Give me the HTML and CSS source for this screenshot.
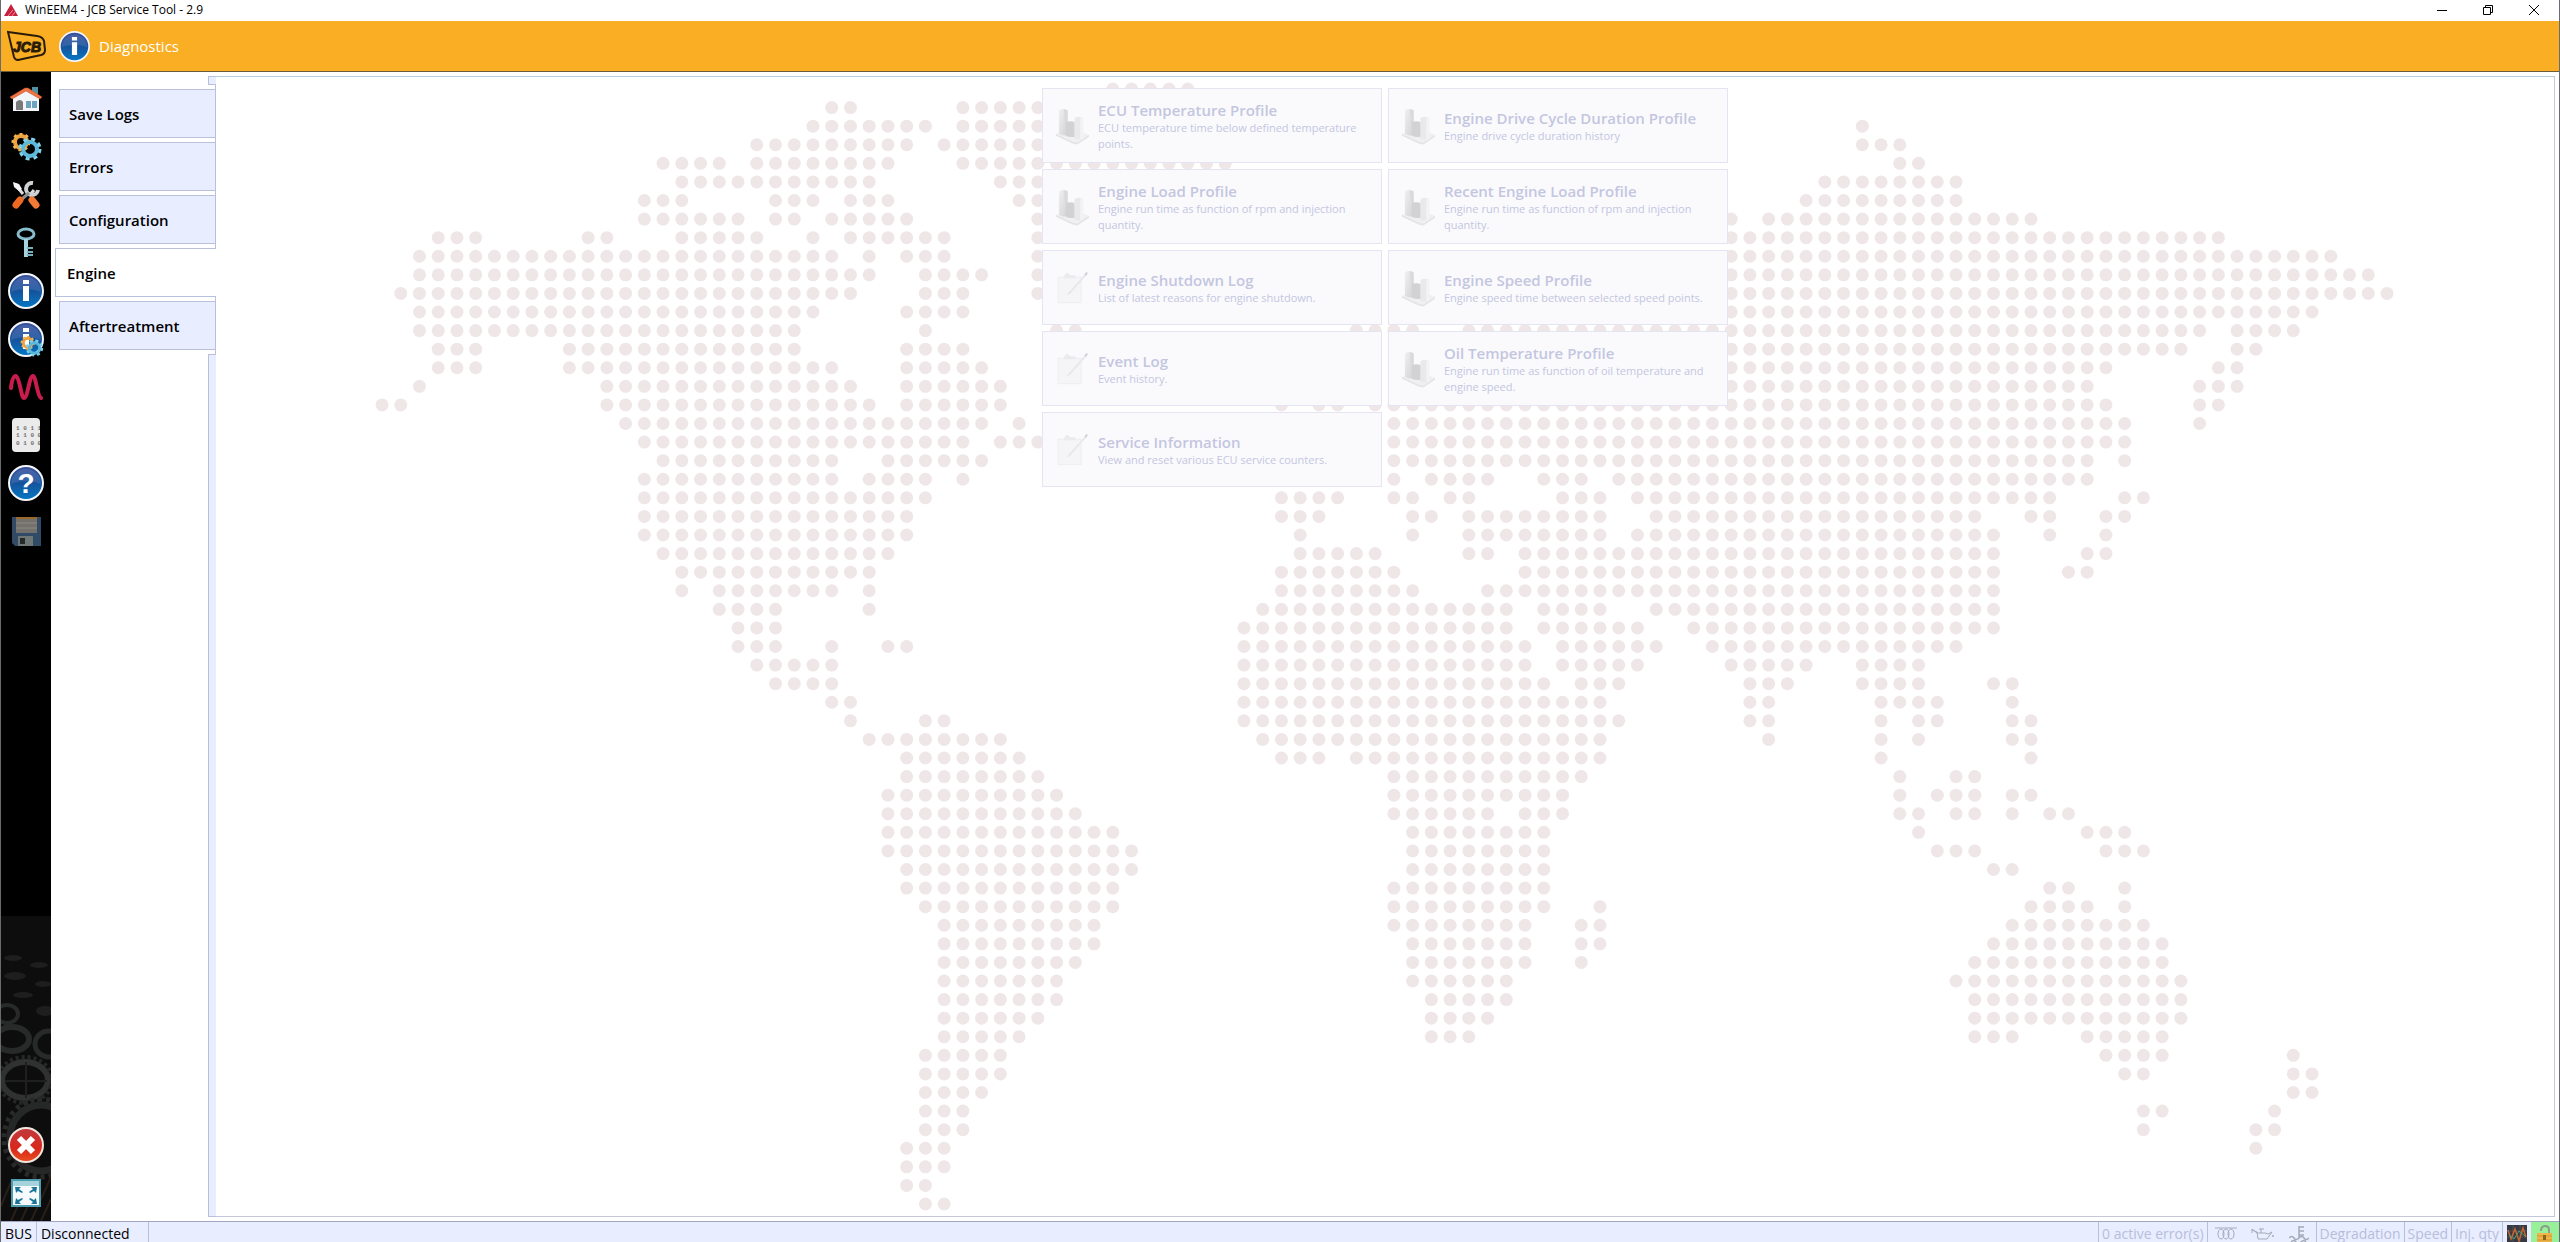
FILE: index.html
```html
<!DOCTYPE html>
<html lang="en">
<head>
    <meta charset="UTF-8">
    <title>WinEEM4 - JCB Service Tool - 2.9</title>
    <link rel="stylesheet" href="styles.css">
</head>
<body>

    <!-- Shared icons -->
    <svg class="sprite" aria-hidden="true">
        <defs>
            <linearGradient id="blue" x1="0" y1="0" x2="0" y2="1">
                <stop offset="0" stop-color="#3d4f9e"/>
                <stop offset="0.5" stop-color="#15539c"/>
                <stop offset="1" stop-color="#0478c4"/>
            </linearGradient>
            <linearGradient id="red" x1="0" y1="0" x2="0" y2="1">
                <stop offset="0" stop-color="#c03a3e"/>
                <stop offset="0.6" stop-color="#d8281c"/>
                <stop offset="1" stop-color="#e8501e"/>
            </linearGradient>
            <linearGradient id="bar" x1="0" y1="0" x2="1" y2="1">
                <stop offset="0" stop-color="#f0f0f0"/>
                <stop offset="1" stop-color="#d2d2d4"/>
            </linearGradient>
        </defs>
        <symbol id="icon-info" viewBox="0 0 36 36">
            <circle cx="18" cy="18" r="17" fill="url(#blue)" stroke="#f4f6fa" stroke-width="2"/>
            <path d="M3 19a15 15 0 0 1 30 0q-15-6-30 0z" fill="#ffffff" opacity="0.1"/>
            <path d="M15 7h6v4h-6zM15 13h6v15h-6z" fill="#ffffff"/>
        </symbol>
        <symbol id="icon-gears" viewBox="0 0 32 28">
            <circle cx="11" cy="9" r="6" fill="none" stroke="#eda13c" stroke-width="4"/>
            <circle cx="11" cy="9" r="8" fill="none" stroke="#f2b04e" stroke-width="3" stroke-dasharray="3 3"/>
            <circle cx="20" cy="16" r="7" fill="none" stroke="#5cb9dc" stroke-width="4"/>
            <circle cx="20" cy="16" r="10" fill="none" stroke="#7fd0ea" stroke-width="3" stroke-dasharray="4 4"/>
        </symbol>
        <symbol id="icon-chart" viewBox="0 0 36 38">
            <path d="M1 27l18-5 16 6-12 8-5-1z" fill="#f0f0f2"/>
            <path d="M1 27l17 8 5 1 12-8v2l-12 8-5-1-17-8z" fill="#e4e4e6"/>
            <path d="M4 3q5-3 9 0v25q-5 2-9-1z" fill="url(#bar)"/>
            <path d="M9 2q3 0 4 1v12l-3-1z" fill="#dadadc"/>
            <path d="M20 11q5-3 9 0v21q-5 2-9 0z" fill="#e9e9eb"/>
            <path d="M26 10l3 1v21l-3 1z" fill="#f3f3f5"/>
            <path d="M11 15q5-2 9 0v15q-5 1-9-1z" fill="#d2d2d4"/>
        </symbol>
        <symbol id="icon-log" viewBox="0 0 36 38">
            <path d="M3 8h24v26H3z" fill="#f5f5f7" stroke="#eeeef1"/>
            <path d="M9 7l3-4 4 3h5v3H9z" fill="#ebebee"/>
            <path d="M15 24L31 6" stroke="#e8e8ec" stroke-width="2"/>
            <path d="M31 6l2-3" stroke="#cfcfd4" stroke-width="2"/>
            <path d="M13 26l3-3" stroke="#dadade"/>
        </symbol>
    </svg>

    <div class="window">

        <!-- Title Bar -->
        <div class="titlebar">
            <svg class="app-icon" viewBox="0 0 14 12" aria-hidden="true">
                <path d="M7 0l7 12H0z" fill="#c8203c"/>
                <path d="M4 12l5-6M8 12l3-4" stroke="#e890a0"/>
            </svg>
            <span class="window-title">WinEEM4 - JCB Service Tool - 2.9</span>
            <div class="window-controls">
                <button type="button" aria-label="Minimize">
                    <svg viewBox="0 0 10 10"><path d="M0 5.5h10" stroke="#000"/></svg>
                </button>
                <button type="button" aria-label="Restore">
                    <svg viewBox="0 0 10 10"><path d="M.5 2.5h7v7h-7zM2.5 2.5v-2h7v7h-2" fill="none" stroke="#000"/></svg>
                </button>
                <button type="button" aria-label="Close">
                    <svg viewBox="0 0 10 10"><path d="M0 0l10 10M10 0L0 10" stroke="#000"/></svg>
                </button>
            </div>
        </div>

        <!-- Header -->
        <header class="header">
            <svg class="logo" viewBox="0 0 40 32" role="img" aria-label="JCB">
                <path d="M1 2l29 4q6 1 7 5l1 9q0 4-4 5L11 30q-3 0-4-3z" fill="none" stroke="#2a1c08" stroke-width="2"/>
                <text x="6" y="22" class="logo-text">JCB</text>
            </svg>
            <svg class="header-icon" aria-hidden="true"><use href="#icon-info"/></svg>
            <h1>Diagnostics</h1>
        </header>

        <div class="body">

            <!-- Tool Bar -->
            <nav class="toolbar" aria-label="Tools">
                <svg class="toolbar-art" viewBox="0 0 50 305" preserveAspectRatio="none" aria-hidden="true">
                    <path d="M0 0h50v305H0z" fill="#0d0d0d"/>
                    <g fill="#1e1e1e">
                        <ellipse cx="12" cy="42" rx="9" ry="3"/>
                        <ellipse cx="38" cy="49" rx="9" ry="3"/>
                        <ellipse cx="14" cy="60" rx="11" ry="4"/>
                        <ellipse cx="42" cy="68" rx="8" ry="3"/>
                        <ellipse cx="22" cy="79" rx="10" ry="3"/>
                        <ellipse cx="44" cy="95" rx="9" ry="5"/>
                    </g>
                    <g fill="none" stroke="#282929">
                        <ellipse cx="6" cy="98" rx="11" ry="9" stroke-width="4"/>
                        <ellipse cx="11" cy="123" rx="17" ry="12" stroke-width="6"/>
                        <ellipse cx="48" cy="128" rx="14" ry="13" stroke-width="5"/>
                        <ellipse cx="24" cy="164" rx="23" ry="18" stroke="#303232" stroke-width="6"/>
                        <ellipse cx="24" cy="164" rx="27" ry="23" stroke="#262828" stroke-width="4" stroke-dasharray="3 3"/>
                        <path d="M25 146v36M4 165h42" stroke="#1e1f1f" stroke-width="2"/>
                        <ellipse cx="40" cy="222" rx="31" ry="33" stroke="#262828" stroke-width="7"/>
                        <ellipse cx="40" cy="222" rx="37" ry="39" stroke="#282a2a" stroke-width="5" stroke-dasharray="4 4"/>
                        <path d="M10 305l18-40M20 305l20-44M30 305l20-44M40 305l10-22M0 290l10-24" stroke="#2a1f18" stroke-width="2"/>
                    </g>
                </svg>
                <button type="button" aria-label="Home">
                    <svg width="34" height="26" viewBox="0 0 34 26">
                        <path d="M23 1h6v10h-6z" fill="#4d93a6"/>
                        <path d="M4 12L17 4l13 8v13H4z" fill="#f2f6fa"/>
                        <path d="M1 11L16 2l3 0 14 9-2 2L17 5 3 13z" fill="#ee7444" stroke="#c84e24" stroke-width="0.5"/>
                        <path d="M7 24v-8q4-4 7 0v8z" fill="#77797c"/>
                        <path d="M17 15h5v7h-5zM23 15h5v7h-5z" fill="#6ea4c0"/>
                    </svg>
                </button>
                <button type="button" aria-label="Settings">
                    <svg width="32" height="28"><use href="#icon-gears"/></svg>
                </button>
                <button type="button" aria-label="Service">
                    <svg width="30" height="28" viewBox="0 0 30 28">
                        <path d="M12 13L4 3M18 15l5-6" stroke="#dcdcdc" stroke-width="3"/>
                        <path d="M2 1l6 2 3 5-3 2-5-4z" fill="#f4f4f4"/>
                        <path d="M22 2a6 6 0 1 0 5 7" fill="none" stroke="#cfd2d4" stroke-width="4"/>
                        <path d="M18 12l-7 6" stroke="#8c8f91" stroke-width="3"/>
                        <path d="M9 19l-4 5" stroke="#ee6a22" stroke-width="7" stroke-linecap="round"/>
                        <path d="M21 19l4 5" stroke="#f27a34" stroke-width="7" stroke-linecap="round"/>
                    </svg>
                </button>
                <button type="button" aria-label="Access key">
                    <svg width="20" height="32" viewBox="0 0 20 32">
                        <ellipse cx="10" cy="7" rx="8" ry="5" fill="none" stroke="#86bccb" stroke-width="3"/>
                        <path d="M10 12v18" stroke="#a6d4de" stroke-width="4"/>
                        <path d="M11 21h6M11 25h6M11 28h6" stroke="#78b0c0" stroke-width="2"/>
                    </svg>
                </button>
                <button type="button" aria-label="Diagnostics">
                    <svg width="36" height="36"><use href="#icon-info"/></svg>
                </button>
                <button type="button" aria-label="Diagnostics settings">
                    <svg width="36" height="36" viewBox="0 0 36 36">
                        <use href="#icon-info" width="36" height="36"/>
                        <use href="#icon-gears" x="11" y="15" width="25" height="21"/>
                    </svg>
                </button>
                <button type="button" aria-label="Measurement">
                    <svg width="34" height="26" viewBox="0 0 34 26">
                        <path d="M2 14C3 4 5 2 7 2C11 4 12 24 15 24C19 24 20 2 24 2C27 2 28 22 32 24" fill="none" stroke="#c81c4c" stroke-width="4" stroke-linecap="round"/>
                    </svg>
                </button>
                <button type="button" aria-label="Raw data">
                    <svg width="28" height="34" viewBox="0 0 28 34">
                        <rect width="28" height="34" rx="4" fill="#ebebeb"/>
                        <g class="digits">
                            <text x="4" y="12">1 0 1 1</text>
                            <text x="4" y="19">1 1 0 0</text>
                            <text x="4" y="27">0 1 0 0</text>
                        </g>
                    </svg>
                </button>
                <button type="button" aria-label="Help">
                    <svg width="36" height="36" viewBox="0 0 36 36">
                        <circle cx="18" cy="18" r="17" fill="url(#blue)" stroke="#f4f6fa" stroke-width="2"/>
                        <path d="M3 19a15 15 0 0 1 30 0q-15-6-30 0z" fill="#ffffff" opacity="0.1"/>
                        <text x="18" y="28" class="help-mark">?</text>
                    </svg>
                </button>
                <button type="button" aria-label="Save" disabled>
                    <svg width="29" height="29" viewBox="0 0 29 29">
                        <path d="M0 0h29v29H3l-3-3z" fill="#314a66"/>
                        <path d="M4 0h21v16H4z" fill="#74716c"/>
                        <path d="M4 0h21v2H4z" fill="#99682a"/>
                        <path d="M4 6h21M4 11h21" stroke="#8d8a86"/>
                        <path d="M6 19h15v10H6z" fill="#6e7676"/>
                        <path d="M8 21h5v6H8z" fill="#252b2c"/>
                    </svg>
                </button>
                <div class="toolbar-gap"></div>
                <button type="button" aria-label="Exit">
                    <svg width="36" height="36" viewBox="0 0 36 36">
                        <circle cx="18" cy="18" r="17" fill="url(#red)" stroke="#f2e4de" stroke-width="2"/>
                        <path d="M11 11l14 14M25 11L11 25" stroke="#ffffff" stroke-width="6"/>
                    </svg>
                </button>
                <button type="button" aria-label="Full screen">
                    <svg width="30" height="28" viewBox="0 0 30 28">
                        <path d="M1 1h28v26H1z" fill="#f6fafc" stroke="#4c9cb0" stroke-width="2"/>
                        <path d="M2 2h26v5H2z" fill="#a6d2de"/>
                        <path d="M4 8h6l-2 2 4 3-1 1-4-2-2 2zM26 8h-6l2 2-4 3 1 1 4-2 2 2zM4 25h6l-2-2 4-3-1-1-4 2-2-2zM26 25h-6l2-2-4-3 1-1 4 2 2-2z" fill="#1a7498"/>
                    </svg>
                </button>
            </nav>

            <!-- Page Tabs -->
            <nav class="tabs" aria-label="Diagnostics pages">
                <div class="tabs-cap"></div>
                <div class="tabs-list">
                    <button type="button" class="tab">Save Logs</button>
                    <button type="button" class="tab">Errors</button>
                    <button type="button" class="tab">Configuration</button>
                    <button type="button" class="tab selected">Engine</button>
                    <button type="button" class="tab">Aftertreatment</button>
                </div>
                <div class="tabs-fill"></div>
            </nav>

            <!-- Engine Page -->
            <main class="panel">
                <svg class="map" id="map" viewBox="0 0 2338 1139" preserveAspectRatio="xMidYMid slice" aria-hidden="true"></svg>
                <div class="cards">
                    <button type="button" class="card" disabled>
                        <svg class="card-icon"><use href="#icon-chart"/></svg>
                        <span class="card-text">
                            <span class="card-title">ECU Temperature Profile</span>
                            <span class="card-info">ECU temperature time below defined temperature points.</span>
                        </span>
                    </button>
                    <button type="button" class="card" disabled>
                        <svg class="card-icon"><use href="#icon-chart"/></svg>
                        <span class="card-text">
                            <span class="card-title">Engine Drive Cycle Duration Profile</span>
                            <span class="card-info">Engine drive cycle duration history</span>
                        </span>
                    </button>
                    <button type="button" class="card" disabled>
                        <svg class="card-icon"><use href="#icon-chart"/></svg>
                        <span class="card-text">
                            <span class="card-title">Engine Load Profile</span>
                            <span class="card-info">Engine run time as function of rpm and injection quantity.</span>
                        </span>
                    </button>
                    <button type="button" class="card" disabled>
                        <svg class="card-icon"><use href="#icon-chart"/></svg>
                        <span class="card-text">
                            <span class="card-title">Recent Engine Load Profile</span>
                            <span class="card-info">Engine run time as function of rpm and injection quantity.</span>
                        </span>
                    </button>
                    <button type="button" class="card" disabled>
                        <svg class="card-icon"><use href="#icon-log"/></svg>
                        <span class="card-text">
                            <span class="card-title">Engine Shutdown Log</span>
                            <span class="card-info">List of latest reasons for engine shutdown.</span>
                        </span>
                    </button>
                    <button type="button" class="card" disabled>
                        <svg class="card-icon"><use href="#icon-chart"/></svg>
                        <span class="card-text">
                            <span class="card-title">Engine Speed Profile</span>
                            <span class="card-info">Engine speed time between selected speed points.</span>
                        </span>
                    </button>
                    <button type="button" class="card" disabled>
                        <svg class="card-icon"><use href="#icon-log"/></svg>
                        <span class="card-text">
                            <span class="card-title">Event Log</span>
                            <span class="card-info">Event history.</span>
                        </span>
                    </button>
                    <button type="button" class="card" disabled>
                        <svg class="card-icon"><use href="#icon-chart"/></svg>
                        <span class="card-text">
                            <span class="card-title">Oil Temperature Profile</span>
                            <span class="card-info">Engine run time as function of oil temperature and engine speed.</span>
                        </span>
                    </button>
                    <button type="button" class="card" disabled>
                        <svg class="card-icon"><use href="#icon-log"/></svg>
                        <span class="card-text">
                            <span class="card-title">Service Information</span>
                            <span class="card-info">View and reset various ECU service counters.</span>
                        </span>
                    </button>
                </div>
            </main>
        </div>

        <!-- Status Bar -->
        <footer class="statusbar">
            <span class="status">BUS</span>
            <span class="status connection">Disconnected</span>
            <span class="status-gap"></span>
            <span class="status inactive">0 active error(s)</span>
            <span class="status lamps">
                <svg width="22" height="16" viewBox="0 0 22 16">
                    <path d="M0 2h22" stroke="#a3abb8"/>
                    <ellipse cx="6" cy="8" rx="3" ry="5" fill="none" stroke="#a3abb8"/>
                    <ellipse cx="11" cy="8" rx="3" ry="5" fill="none" stroke="#a3abb8"/>
                    <ellipse cx="16" cy="8" rx="3" ry="5" fill="none" stroke="#a3abb8"/>
                </svg>
                <svg width="24" height="14" viewBox="0 0 24 14">
                    <path d="M1 3l5 2 1 7h9l5-7-4 2-3-1H6L1 2v4M8 2h5M10 2v4" fill="none" stroke="#a3abb8"/>
                    <circle cx="22" cy="9" r="1" fill="#a3abb8"/>
                </svg>
                <svg width="20" height="20" viewBox="0 0 20 20">
                    <path d="M10 2v12M10 3h5M10 7h5M10 11h5M0 14q3-3 5 0t5 0 5 0 5 0M2 18q3-3 5 0t5 0 5 0" fill="none" stroke="#a3abb8" stroke-width="1.5"/>
                </svg>
            </span>
            <span class="status inactive">Degradation</span>
            <span class="status inactive">Speed</span>
            <span class="status inactive">Inj. qty</span>
            <span class="status-icon">
                <svg width="20" height="18" viewBox="0 0 20 18">
                    <path d="M0 0h20v18H0z" fill="#343a40"/>
                    <path d="M0 6h20M0 12h20M6 0v18M13 0v18" stroke="#4c5359"/>
                    <path d="M1 5l3 9 4-10 4 12 4-13 3 9" fill="none" stroke="#cb6330" stroke-width="1.5"/>
                    <path d="M2 10l5 4 5-8 6 5" fill="none" stroke="#41a37e"/>
                </svg>
            </span>
            <span class="status-icon unlocked">
                <svg width="16" height="18" viewBox="0 0 16 18">
                    <path d="M4 6q0-5 4-5t4 4v4" fill="none" stroke="#8f9c8c" stroke-width="2"/>
                    <path d="M0 8h15v10H0z" fill="#eeb54a"/>
                    <path d="M0 11h15M0 15h15" stroke="#d8942c"/>
                    <path d="M6 10h3v5H6z" fill="#8c6420"/>
                </svg>
            </span>
        </footer>
    </div>

    <script src="map.js"></script>
</body>
</html>
```

FILE: styles.css
```css
/* Base Styles */
* {
    box-sizing: border-box;
}

body {
    margin: 0;
    font-family: "Open Sans", "Noto Sans", sans-serif;
    color: #000;
    background-color: #fff;
}

button {
    margin: 0;
    padding: 0;
    border: none;
    background: none;
    font-family: inherit;
    color: inherit;
}

.sprite {
    position: absolute;
    width: 0;
    height: 0;
}

.window {
    display: flex;
    flex-direction: column;
    height: 100vh;
    overflow: hidden;
    border-left: 1px solid #6b6b6b;
    border-right: 1px solid #6b6b78;
}

/* Title Bar */
.titlebar {
    display: flex;
    align-items: center;
    flex: none;
    height: 21px;
    padding: 0 2px 2px 3px;
}

.app-icon {
    width: 14px;
    height: 12px;
    margin-right: 7px;
}

.window-title {
    font-size: 12px;
    line-height: 18px;
}

.window-controls {
    display: flex;
    margin-left: auto;
}

.window-controls button {
    display: flex;
    align-items: center;
    justify-content: center;
    width: 46px;
    height: 16px;
}

.window-controls svg {
    width: 10px;
    height: 10px;
}

/* Header */
.header {
    display: flex;
    align-items: center;
    flex: none;
    height: 51px;
    padding-left: 6px;
    background-color: #f9ae24;
    border-bottom: 1px solid #6e5a3c;
}

.logo {
    width: 40px;
    height: 32px;
    margin-right: 12px;
}

.logo-text {
    font: italic bold 14px "Liberation Sans", sans-serif;
    fill: #2a1c08;
    stroke: #2a1c08;
    stroke-width: 1px;
}

.header-icon {
    width: 31px;
    height: 31px;
    margin-right: 9px;
}

.header h1 {
    margin: 0;
    font-size: 15px;
    font-weight: 400;
    color: #fff;
}

.body {
    display: flex;
    flex: 1;
    min-height: 0;
}

/* Tool Bar */
.toolbar {
    position: relative;
    display: flex;
    flex-direction: column;
    flex: none;
    width: 50px;
    padding: 3px 0 4px;
    background-color: #000;
}

.toolbar-art {
    position: absolute;
    left: 0;
    bottom: 0;
    width: 100%;
    height: 305px;
}

.toolbar button {
    position: relative;
    display: flex;
    align-items: center;
    justify-content: center;
    height: 48px;
}

.toolbar-gap {
    flex: 1;
}

.digits {
    font: bold 6px "Liberation Mono", monospace;
    fill: #707070;
}

.help-mark {
    font: bold 28px "Liberation Sans", sans-serif;
    text-anchor: middle;
    fill: #fff;
}

/* Page Tabs */
.tabs {
    display: flex;
    flex-direction: column;
    flex: none;
    width: 165px;
    padding: 4px 0;
}

.tabs-cap,
.tabs-fill {
    align-self: flex-end;
    width: 8px;
    background-color: #e8eeff;
    border: 1px solid #b9c0dc;
    border-right: none;
}

.tabs-cap {
    height: 9px;
}

.tabs-fill {
    flex: 1;
}

.tabs-list {
    display: flex;
    flex-direction: column;
    gap: 4px;
    padding: 4px 0 4px 8px;
    border-right: 1px solid #b9c0dc;
}

.tab {
    height: 49px;
    padding: 0 0 0 9px;
    border: 1px solid #b9c0dc;
    border-right: none;
    background-color: #e8eeff;
    font-size: 15px;
    font-weight: 600;
    text-align: left;
}

.tab.selected {
    margin: 0 -1px 0 -4px;
    padding-left: 11px;
    background-color: #fff;
}

/* Engine Page */
.panel {
    position: relative;
    flex: 1;
    min-width: 0;
    margin: 4px 4px 4px 0;
    padding-top: 11px;
    border: 1px solid #c4c6da;
    border-top-color: #b4cbe0;
    border-left: none;
}

.map {
    position: absolute;
    top: 0;
    left: 0;
    width: 100%;
    height: 100%;
    fill: #efe6e8;
}

.cards {
    position: relative;
    display: grid;
    grid-template-columns: 340px 340px;
    gap: 6px;
    justify-content: center;
}

.card {
    display: flex;
    align-items: center;
    gap: 8px;
    height: 75px;
    padding: 0 8px 0 12px;
    border: 1px solid #e4e4f2;
    background-color: #fafafd;
    color: #c4c6e0;
    text-align: left;
}

.card-icon {
    flex: none;
    width: 35px;
    height: 38px;
}

.card-text {
    display: flex;
    flex-direction: column;
}

.card-title {
    font-size: 15px;
    line-height: 20px;
    font-weight: 600;
}

.card-info {
    font-size: 11px;
    line-height: 16px;
}

/* Status Bar */
.statusbar {
    display: flex;
    flex: none;
    height: 21px;
    overflow: hidden;
    border-top: 1px solid #a2a5c0;
    background-color: #e8eeff;
    font-size: 14px;
    line-height: 24px;
}

.status {
    height: 24px;
    padding: 0 4px;
    border-right: 1px solid #b9c0dc;
    white-space: nowrap;
}

.status.connection {
    padding-right: 18px;
}

.status-gap {
    flex: 1;
    border-right: 1px solid #b9c0dc;
}

.status.inactive {
    padding: 0 3px;
    color: #b8bddb;
}

.status.lamps {
    display: flex;
    align-items: center;
    gap: 14px;
    padding: 0 7px;
}

.status-icon {
    display: flex;
    align-items: center;
    justify-content: center;
    width: 28px;
    height: 24px;
}

.unlocked {
    background-color: #98f098;
}
```

FILE: map.js
```javascript
// World map made of dots. One entry per row, each a list of column ranges.
const rows = [
    "39-43",
    "24-25 31-35",
    "23-29 31-35 79",
    "20-28 30-35 79-81",
    "15-18 20-27 31-45 81-82",
    "16-26 33-35 77-84",
    "14-16 21-23 25-27 34-35 76-84",
    "14-19 21-22 24-28 35 72 74-88",
    "3-5 11-12 16-20 23 25-30 35 72-98",
    "2-24 26 28-30 35 72-104",
    "2-26 29-32 35 72-106",
    "1-25 29-31 35 72-107",
    "2-23 28-31 72-103",
    "2-22 29 36-37 52-55 58-97 99-102",
    "3-5 10-22 28-31 72-96 99-100",
    "3-5 10-24 28-32 72-92 98-99",
    "2 12-25 28-33 72-91 97-99",
    "0-1 12-26 28-33 48 50-51 53-92 97-98",
    "13-32 34 54-93 97",
    "14-31 33-35 54-93",
    "15-24 27-32 54-91 93",
    "14-24 26-29 31 54 56-59 62-64 66-91",
    "14-29 48-51 54-55 57-58 63-65 67-89 93-94",
    "14-28 48-50 55-56 58-65 68-85 88-89 92-93",
    "14-28 49 55 58-65 67-86 89 92",
    "15-27 49-53 58-59 61-86 91-92",
    "16-26 48-54 61-86 90-91",
    "16 18-24 26 48-55 59-86",
    "18-21 26 47-60 62-65 68-86",
    "19-21 46-60 62-67 70-86",
    "19-21 24 27-28 46-61 63-68 71-84",
    "20-24 46-61 63-67 72-76 79-82",
    "21-24 46-62 64-66 73-75 79-82 86-87",
    "24-25 46-65 73-74 80-83 87",
    "25 29-30 46-66 73-74 80 82-83 87-88",
    "26-33 47-65 74 80 82 87-88",
    "28-34 48-50 52-65 80 88",
    "28-35 54-64 81 84-85",
    "27-36 54-63 81 83-85 87-88",
    "27-37 54-59 61-63 81-82 84-85 87 89-90",
    "27-39 55-62 82 91-93",
    "27-40 55-62 83-85 92-94",
    "28-40 55-62 86-87",
    "28-39 54-62 89-90 93",
    "29-39 54-62 65 88-91 93",
    "30-38 54-61 64-65 87-94",
    "30-38 55-61 64-65 86-95",
    "30-37 55-61 64 85-95",
    "30-36 55-60 84-96",
    "30-36 56-60 85-96",
    "30-35 56-59 85-96",
    "30-34 56-58 85-87 91-95",
    "29-33 92-95 102",
    "29-33 93-94 102-103",
    "29-32 102-103",
    "29-31 94-95 101",
    "29-31 94 100-101",
    "28-30 100",
    "28-30",
    "28-29",
    "29-30"
];

const map = document.getElementById('map');
const stepX = 2005 / 107;
const stepY = 1115 / 60;

rows.forEach((row, r) => {
    row.split(' ').forEach(range => {
        const [from, to = from] = range.split('-').map(Number);
        for (let c = from; c <= to; c++) {
            const dot = document.createElementNS('http://www.w3.org/2000/svg', 'circle');
            dot.setAttribute('cx', 166 + c * stepX);
            dot.setAttribute('cy', 12 + r * stepY);
            dot.setAttribute('r', 6.5);
            map.appendChild(dot);
        }
    });
});
```
